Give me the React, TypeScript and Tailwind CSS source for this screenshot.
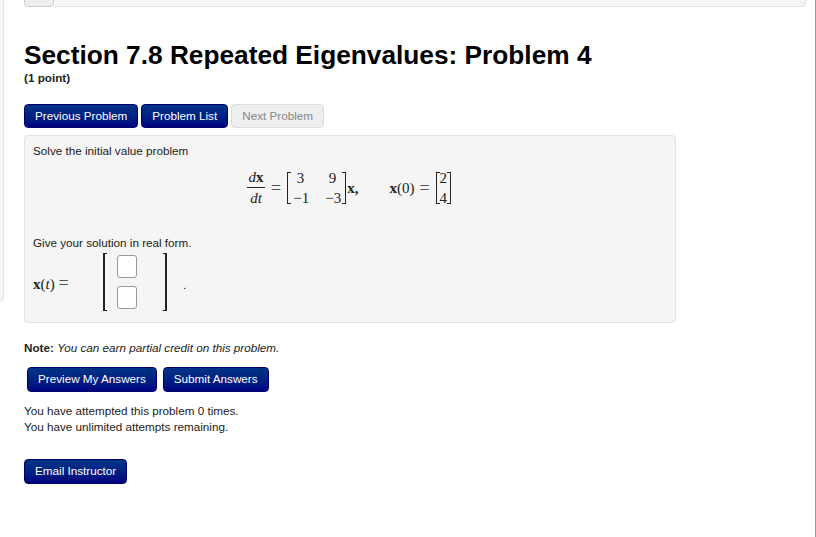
const sans = "font-['Liberation_Sans',Arial,sans-serif]";
const serif = "font-['Liberation_Serif','Times_New_Roman',serif]";

function NavyButton({ label, className = 'h-[25px]' }: { label: string; className?: string }) {
  return (
    <button className={`px-[10px] pb-[1px] rounded-[4px] border border-[#00006b] bg-gradient-to-b from-[#003385] to-[#000080] text-white text-[11.7px] leading-[18px] whitespace-nowrap ${className}`}>
      {label}
    </button>
  );
}

function Bracket({ side, className = '' }: { side: 'l' | 'r'; className?: string }) {
  return (
    <span className={`block w-[4px] border-y border-[#222] ${side === 'l' ? 'border-l' : 'border-r'} ${className}`} />
  );
}

function AnswerBox() {
  return <span className="block w-[20px] h-[23px] bg-white border border-[#999] rounded-[3px]" />;
}

function Equals() {
  return <span className="text-[18px] leading-none text-[#555]">=</span>;
}

function Equation() {
  return (
    <div className={`${serif} flex items-center h-[40px] pl-[214px] text-[15px] leading-none text-[#222]`}>
      <div className="flex flex-col items-center w-[18px]">
        <span className="pb-[2px]"><i>d</i><b>x</b></span>
        <span className="w-full border-t border-[#222]" />
        <i className="pt-[3px]">dt</i>
      </div>
      <span className="mx-[6px]"><Equals /></span>
      <Bracket side="l" className="h-[32px]" />
      <div className="grid grid-cols-[18px_32px] gap-y-[5px] text-right">
        <span className="pr-[5px]">3</span>
        <span className="pr-[5px]">9</span>
        <span>−1</span>
        <span>−3</span>
      </div>
      <Bracket side="r" className="h-[32px] ml-[1px]" />
      <b className="ml-[1px]">x,</b>
      <span className="w-[31px]" />
      <span><b>x</b>(0)</span>
      <span className="ml-[5px] mr-[6px]"><Equals /></span>
      <Bracket side="l" className="h-[32px]" />
      <div className="flex flex-col gap-y-[5px]">
        <span>2</span>
        <span>4</span>
      </div>
      <Bracket side="r" className="h-[32px]" />
    </div>
  );
}

export default function App() {
  return (
    <div className={`${sans} relative w-[816px] h-[537px] overflow-hidden bg-white border-r border-[#999] text-[11.7px] leading-[15px] text-[#222]`}>
      {/* left well, cut off by the window */}
      <div className="absolute left-[-10px] top-[-10px] w-[14px] h-[312px] bg-[#f5f5f5] border border-[#e3e3e3] rounded-[4px]" />

      <div className="pl-[24px]">
        {/* nav bar scrolled off the top */}
        <div className="flex h-[7px] items-end gap-[1px] pr-[9px]">
          <div className="w-[30px] h-[8px] bg-[#eeeeee] border border-[#cccccc] rounded-b-[4px] shrink-0" />
          <div className="flex-1 h-[7px] bg-[#f5f5f5] border-b border-r border-[#e3e3e3] rounded-br-[4px]" />
        </div>

        <h1 className="mt-[32px] text-[26.25px] leading-[32px] font-bold text-black">
          Section 7.8 Repeated Eigenvalues: Problem 4
        </h1>
        <p className="font-bold leading-[14px] text-[#222]">(1 point)</p>

        <div className="flex gap-[3px] mt-[19px]">
          <NavyButton label="Previous Problem" className="h-[24px]" />
          <NavyButton label="Problem List" className="h-[24px]" />
          <button className="h-[24px] px-[10px] pb-[1px] rounded-[4px] border border-[#dddddd] bg-[#eeeeee] text-[#888] text-[11.7px] leading-[18px]">
            Next Problem
          </button>
        </div>

        <div className="mt-[7px] w-[652px] h-[188px] bg-[#f5f5f5] border border-[#e3e3e3] rounded-[4px] px-[8px] pt-[7px]">
          <p>Solve the initial value problem</p>
          <div className="mt-[10px]"><Equation /></div>
          <p className="mt-[27px]">Give your solution in real form.</p>
          <div className="flex items-center mt-[2px] h-[59px]">
            <span className={`${serif} text-[15px] w-[70px] leading-none pt-[2px]`}>
              <b>x</b>(<i>t</i>) <Equals />
            </span>
            <Bracket side="l" className="h-[58px] border-l-2" />
            <div className="flex flex-col gap-[8px] ml-[10px]">
              <AnswerBox />
              <AnswerBox />
            </div>
            <Bracket side="r" className="h-[58px] ml-[26px] border-r-2" />
            <span className="ml-[16px] mt-[6px]">.</span>
          </div>
        </div>

        <p className="mt-[17px]">
          <b>Note:</b> <i>You can earn partial credit on this problem.</i>
        </p>

        <div className="flex gap-[6px] ml-[3px] mt-[12px]">
          <NavyButton label="Preview My Answers" />
          <NavyButton label="Submit Answers" />
        </div>

        <p className="mt-[11px] leading-[16px]">
          You have attempted this problem 0 times.<br />
          You have unlimited attempts remaining.
        </p>

        <NavyButton label="Email Instructor" className="h-[25px] mt-[24px]" />
      </div>
    </div>
  );
}
